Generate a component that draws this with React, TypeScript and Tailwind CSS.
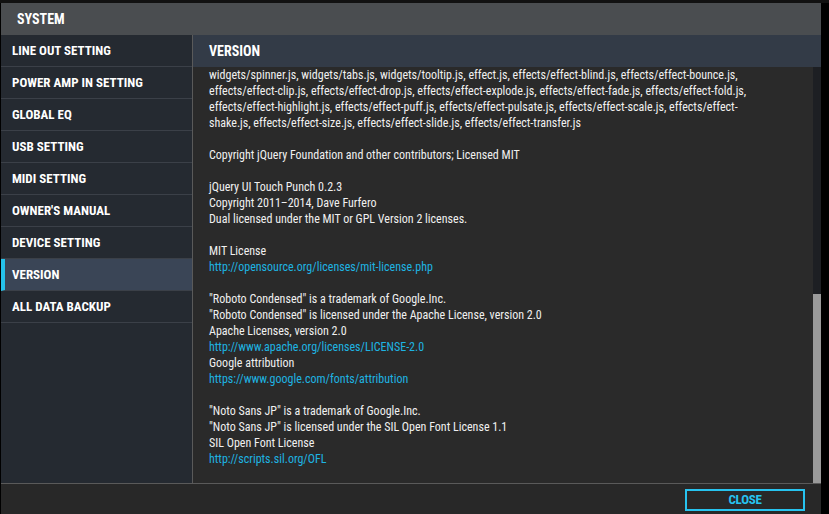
const font = { fontFamily: '"Roboto", sans-serif' };

const menu = [
  'LINE OUT SETTING',
  'POWER AMP IN SETTING',
  'GLOBAL EQ',
  'USB SETTING',
  'MIDI SETTING',
  "OWNER'S MANUAL",
  'DEVICE SETTING',
  'VERSION',
  'ALL DATA BACKUP',
];

type Line = { text?: string; link?: boolean };

const lines: Line[] = [
  { text: 'widgets/spinner.js, widgets/tabs.js, widgets/tooltip.js, effect.js, effects/effect-blind.js, effects/effect-bounce.js,' },
  { text: 'effects/effect-clip.js, effects/effect-drop.js, effects/effect-explode.js, effects/effect-fade.js, effects/effect-fold.js,' },
  { text: 'effects/effect-highlight.js, effects/effect-puff.js, effects/effect-pulsate.js, effects/effect-scale.js, effects/effect-' },
  { text: 'shake.js, effects/effect-size.js, effects/effect-slide.js, effects/effect-transfer.js' },
  {},
  { text: 'Copyright jQuery Foundation and other contributors; Licensed MIT' },
  {},
  { text: 'jQuery UI Touch Punch 0.2.3' },
  { text: 'Copyright 2011\u20132014, Dave Furfero' },
  { text: 'Dual licensed under the MIT or GPL Version 2 licenses.' },
  {},
  { text: 'MIT License' },
  { text: 'http://opensource.org/licenses/mit-license.php', link: true },
  {},
  { text: '"Roboto Condensed" is a trademark of Google.Inc.' },
  { text: '"Roboto Condensed" is licensed under the Apache License, version 2.0' },
  { text: 'Apache Licenses, version 2.0' },
  { text: 'http://www.apache.org/licenses/LICENSE-2.0', link: true },
  { text: 'Google attribution' },
  { text: 'https://www.google.com/fonts/attribution', link: true },
  {},
  { text: '"Noto Sans JP" is a trademark of Google.Inc.' },
  { text: '"Noto Sans JP" is licensed under the SIL Open Font License 1.1' },
  { text: 'SIL Open Font License' },
  { text: 'http://scripts.sil.org/OFL', link: true },
];

export default function App() {
  return (
    <div className="flex h-[514px] w-[829px] flex-col overflow-hidden bg-black font-stretch-condensed" style={font}>
      <div className="h-[3px] shrink-0 bg-[#111111]" />
      <div className="ml-px flex w-[820px] flex-1 flex-col bg-[#2a2a2a]">
        <div className="flex h-8 shrink-0 items-center bg-[#4a4d50] px-4 text-[14px] font-bold text-white">
          SYSTEM
        </div>

        <div className="flex min-h-0 flex-1">
          <nav className="flex w-[191px] shrink-0 flex-col bg-[#252a31]">
            {menu.map((item) => {
              const active = item === 'VERSION';
              return (
                <div
                  key={item}
                  className={`flex h-8 items-center border-b border-[#3b4048] pt-px text-[13px] font-bold text-white ${
                    active ? 'border-l-4 border-l-[#25c2ea] bg-[#3a4556] pl-[7px]' : 'pl-[11px]'
                  }`}
                >
                  {item}
                </div>
              );
            })}
          </nav>
          <div className="w-px shrink-0 bg-[#5a5a5a]" />

          <section className="flex min-w-0 flex-1 flex-col">
            <div className="flex h-8 shrink-0 items-center bg-[#333b47] px-4 text-[14px] font-bold text-white">
              VERSION
            </div>
            <div className="flex min-h-0 flex-1">
              <div className="flex-1 overflow-hidden pl-4 text-[12px] leading-4 text-[#f0f0f0]">
                {lines.map((l, i) =>
                  l.text ? (
                    <div key={i} className={`whitespace-nowrap ${l.link ? 'text-[#1eb4e2]' : ''}`}>
                      {l.text}
                    </div>
                  ) : (
                    <div key={i} className="h-4" />
                  )
                )}
              </div>
              <div className="flex w-2 shrink-0 flex-col bg-[#1d1f23]">
                <div className="mt-auto h-[189px] bg-[#9a9a9a]" />
              </div>
            </div>
          </section>
        </div>

        <footer className="flex h-[31px] shrink-0 items-start justify-end border-t border-[#5a5a5a] bg-[#282828] pr-4 pt-[5px]">
          <button className="flex h-[22px] w-[120px] items-center justify-center border-2 border-[#27c3ef] text-[13px] font-bold tracking-[-0.3px] text-[#27c3ef]">
            CLOSE
          </button>
        </footer>
      </div>
    </div>
  );
}
